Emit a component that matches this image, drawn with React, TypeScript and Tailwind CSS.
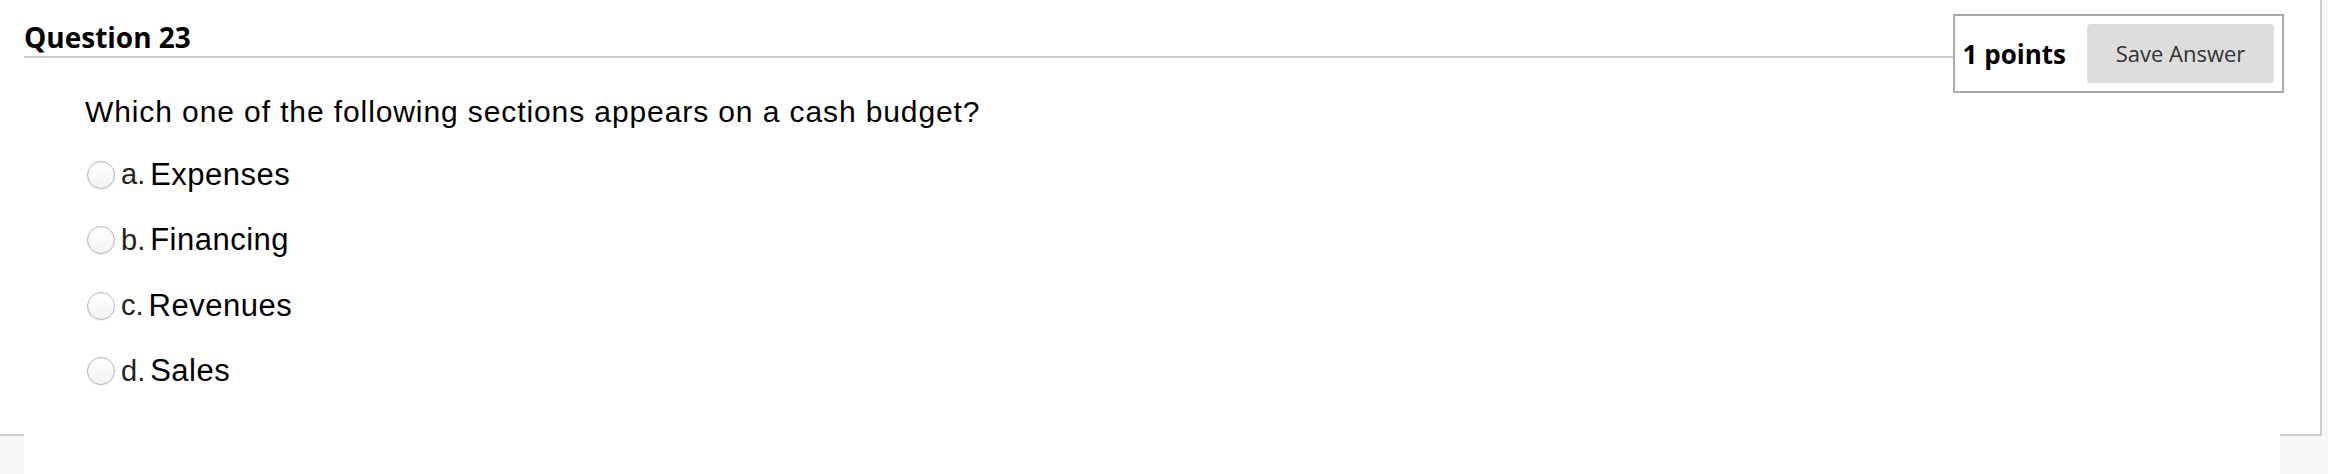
import React from 'react';

const options = [
  { letter: 'a.', text: 'Expenses' },
  { letter: 'b.', text: 'Financing' },
  { letter: 'c.', text: 'Revenues' },
  { letter: 'd.', text: 'Sales' },
];

export default function App() {
  return (
    <div className="w-[2328px] h-[474px] bg-[#f6f6f6] overflow-hidden flex flex-col">
      {/* question card */}
      <div className="w-[2322px] h-[434px] bg-white border-r-2 border-[#cccccc] flex flex-col">
        <div className="flex items-start pl-[24px] pr-[36px]">
          <h3
            className="flex-1 pt-[18px] leading-[38px] text-[28px] font-bold text-black border-b-2 border-[#cccccc]"
            style={{ fontFamily: '"Open Sans", sans-serif' }}
          >
            Question 23
          </h3>
          <div
            className="mt-[14px] border-2 border-[#aaaaaa] p-2 flex items-center gap-[21px]"
            style={{ fontFamily: '"Open Sans", sans-serif' }}
          >
            <span className="text-[26px] font-bold text-black leading-none">1 points</span>
            <button className="w-[187px] h-[59px] rounded-[4px] bg-[#dcdcdc] text-[22px] text-[#333333]">
              Save Answer
            </button>
          </div>
        </div>

        <div className="pl-[85px]" style={{ fontFamily: '"Liberation Sans", Arial, sans-serif' }}>
          <p className="-mt-[4px] text-[30px] tracking-[0.9px] text-black">
            Which one of the following sections appears on a cash budget?
          </p>
          <div className="mt-[8px] flex flex-col pl-[2px]">
            {options.map((o) => (
              <label key={o.letter} className="h-[65.5px] flex items-center">
                <span className="w-[28px] h-[28px] rounded-full border border-[#b4b4b4] bg-gradient-to-b from-white to-[#f2f2f2] shadow-[0_1px_1px_rgba(0,0,0,0.08)]" />
                <span className="ml-[6px] text-[29px] text-[#222222]">{o.letter}</span>
                <span className="ml-[5px] text-[31px] tracking-[0.5px] text-black">{o.text}</span>
              </label>
            ))}
          </div>
        </div>
      </div>

      {/* lower strip */}
      <div className="flex flex-1">
        <div className="w-[24px] border-t-2 border-[#cccccc]" />
        <div className="w-[2256px] bg-white" />
        <div className="w-[42px] border-t-2 border-[#cccccc]" />
      </div>
    </div>
  );
}
